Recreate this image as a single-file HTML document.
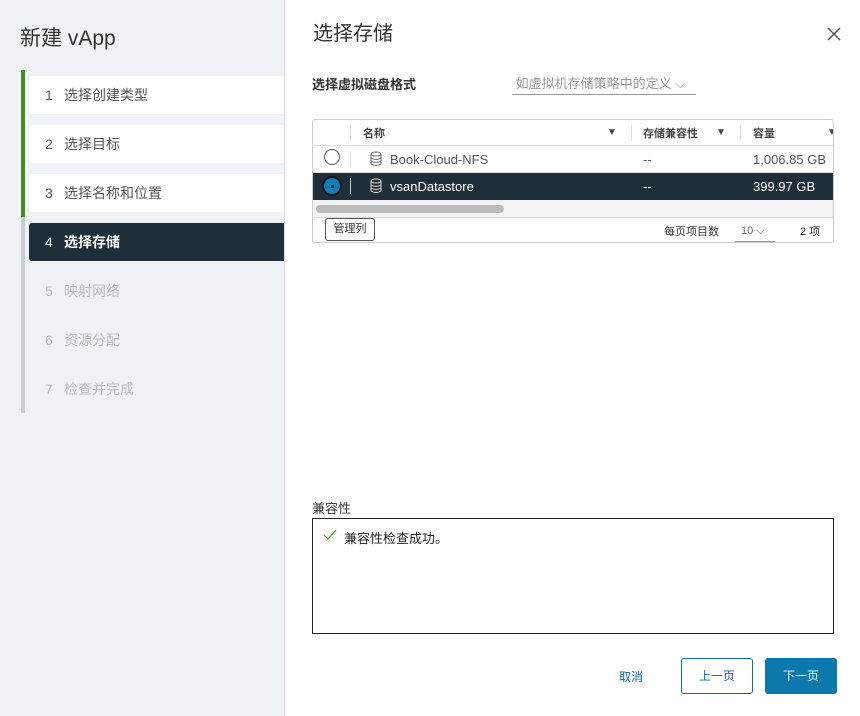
<!DOCTYPE html>
<html><head><meta charset="utf-8"><style>
*{margin:0;padding:0;box-sizing:border-box}
body{width:860px;height:716px;background:#fff;font-family:"Liberation Sans","Noto Sans CJK SC",sans-serif;position:relative;overflow:hidden;color:#333}
.a{position:absolute}
#left{left:0;top:0;width:285px;height:716px;background:#eff3f7;border-right:1px solid #d5dbe0}
.step{position:absolute;left:29px;width:255px;height:38px;border-radius:3px 0 0 3px;font-size:14px;line-height:38px;padding-left:16px;color:#555}
.step b{font-weight:normal;display:inline-block;width:19px}
.w{background:#fff}
.d{background:#1f2f3a;color:#fff;font-weight:bold}
.g{color:#b7bcc0}
.t{font-size:13px}
</style></head><body>
<div id="left" class="a">
<div class="a" style="left:20px;top:22px;font-size:21px;color:#333">新建 vApp</div>
<div class="a" style="left:21px;top:70px;width:4px;height:147px;background:#4a8a1f"></div>
<div class="a" style="left:21px;top:217px;width:4px;height:196px;background:#c8cdd1"></div>
<div class="step w" style="top:76px"><b>1</b>选择创建类型</div>
<div class="step w" style="top:125px"><b>2</b>选择目标</div>
<div class="step w" style="top:174px"><b>3</b>选择名称和位置</div>
<div class="step d" style="top:223px"><b>4</b>选择存储</div>
<div class="step g" style="top:272px"><b>5</b>映射网络</div>
<div class="step g" style="top:321px"><b>6</b>资源分配</div>
<div class="step g" style="top:370px"><b>7</b>检查并完成</div>
</div>
<div class="a" style="left:313px;top:17px;font-size:20px;color:#333">选择存储</div>
<svg class="a" style="left:827px;top:27px" width="14" height="14"><path d="M1 1L13 13M13 1L1 13" stroke="#555" stroke-width="1.5"/></svg>
<div class="a t" style="left:312px;top:74px;font-weight:bold">选择虚拟磁盘格式</div>
<div class="a t" style="left:512px;top:73px;width:184px;height:22px;border-bottom:1px solid #999;color:#999">&nbsp;如虚拟机存储策略中的定义 ⌵</div>
<div class="a" style="left:312px;top:119px;width:522px;height:124px;border:1px solid #ccc;border-radius:3px;overflow:hidden">
 <div class="a" style="left:0;top:0;width:522px;height:26px;border-bottom:1px solid #ddd;font-size:11px;font-weight:bold;color:#444">
  <div class="a" style="left:37px;top:5px;width:1px;height:16px;background:#ddd"></div>
  <div class="a" style="left:50px;top:5px">名称</div><div class="a" style="left:294px;top:7px;font-size:10px">▼</div>
  <div class="a" style="left:318px;top:5px;width:1px;height:16px;background:#ddd"></div>
  <div class="a" style="left:330px;top:5px">存储兼容性</div><div class="a" style="left:403px;top:7px;font-size:10px">▼</div>
  <div class="a" style="left:427px;top:5px;width:1px;height:16px;background:#ddd"></div>
  <div class="a" style="left:440px;top:5px">容量</div><div class="a" style="left:514px;top:7px;font-size:10px">▼</div>
 </div>
 <div class="a t" style="left:0;top:26px;width:522px;height:27px;color:#555;border-bottom:1px solid #ddd">
  <div class="a" style="left:11px;top:3px;width:16px;height:16px;border:1px solid #555;border-radius:50%"></div>
  <div class="a" style="left:37px;top:5px;width:1px;height:16px;background:#ddd"></div>
  <svg class="a" style="left:57px;top:5px" width="12" height="16"><ellipse cx="6" cy="3" rx="5" ry="2" fill="none" stroke="#666"/><path d="M1 3V13Q6 16 11 13V3M1 7Q6 10 11 7M1 10Q6 13 11 10" fill="none" stroke="#666"/></svg>
  <div class="a" style="left:77px;top:6px">Book-Cloud-NFS</div>
  <div class="a" style="left:330px;top:6px">--</div><div class="a" style="left:440px;top:6px">1,006.85 GB</div>
 </div>
 <div class="a t" style="left:0;top:53px;width:522px;height:27px;background:#1f2f3a;color:#fff">
  <div class="a" style="left:9px;top:3px;width:20px;height:20px;border:2px solid #0a1520;border-radius:50%;background:#0d7fb5"><div class="a" style="left:7px;top:7px;width:3px;height:3px;background:#0a1520;border-radius:50%"></div></div>
  <div class="a" style="left:37px;top:5px;width:1px;height:16px;background:#ccc"></div>
  <svg class="a" style="left:57px;top:5px" width="12" height="16"><ellipse cx="6" cy="3" rx="5" ry="2" fill="none" stroke="#ddd"/><path d="M1 3V13Q6 16 11 13V3M1 7Q6 10 11 7M1 10Q6 13 11 10" fill="none" stroke="#ddd"/></svg>
  <div class="a" style="left:77px;top:6px">vsanDatastore</div>
  <div class="a" style="left:330px;top:6px">--</div><div class="a" style="left:440px;top:6px">399.97 GB</div>
 </div>
 <div class="a" style="left:0;top:80px;width:522px;height:18px;background:#f3f3f3;border-bottom:1px solid #ddd"><div class="a" style="left:3px;top:5px;width:188px;height:8px;border-radius:4px;background:#bbb"></div></div>
 <div class="a" style="left:12px;top:98px;width:50px;height:23px;border:1px solid #555;border-radius:3px;font-size:11px;text-align:center;line-height:21px">管理列</div>
 <div class="a" style="left:351px;top:103px;font-size:11px">每页项目数</div>
 <div class="a" style="left:422px;top:102px;width:40px;height:20px;border-bottom:1px solid #999;font-size:11px;color:#666;padding:3px 0 0 6px">10 ⌵</div>
 <div class="a" style="left:487px;top:103px;font-size:11px">2 项</div>
</div>
<div class="a t" style="left:312px;top:498px">兼容性</div>
<div class="a" style="left:312px;top:518px;width:522px;height:116px;border:1px solid #222">
 <svg class="a" style="left:10px;top:10px" width="14" height="12"><path d="M1 6L5 10L13 1" fill="none" stroke="#5a9a2a" stroke-width="1.2"/></svg>
 <div class="a t" style="left:31px;top:9px;color:#222">兼容性检查成功。</div>
</div>
<div class="a" style="left:619px;top:668px;font-size:12px;color:#0b6f9e">取消</div>
<div class="a" style="left:681px;top:658px;width:72px;height:36px;border:1px solid #0b6f9e;border-radius:3px;color:#0b6f9e;font-size:12px;text-align:center;line-height:34px">上一页</div>
<div class="a" style="left:765px;top:658px;width:72px;height:36px;background:#0b79ab;border-radius:3px;color:#fff;font-size:12px;text-align:center;line-height:36px">下一页</div>
</body></html>
